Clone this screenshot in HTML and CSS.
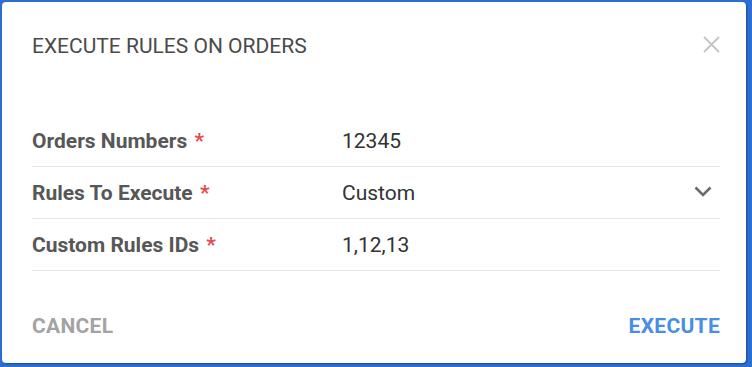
FILE: index.html
```html
<!DOCTYPE html>
<html>
<head>
<meta charset="utf-8">
<link rel="stylesheet" href="styles.css">
</head>
<body>
<div class="dialog">
  <div class="header">
    <div class="title">EXECUTE RULES ON ORDERS</div>
    <svg class="close" width="17" height="17" viewBox="0 0 17 17"><path d="M1 1L16 16M16 1L1 16" stroke="#c4c4c4" stroke-width="1.8" fill="none"/></svg>
  </div>
  <div class="form">
    <div class="row">
      <div class="label">Orders Numbers <span class="req">*</span></div>
      <div class="value">12345</div>
    </div>
    <div class="row">
      <div class="label">Rules To Execute <span class="req">*</span></div>
      <div class="value">Custom</div>
      <svg class="chev" width="18" height="11" viewBox="0 0 18 11"><path d="M1.5 1.5L9 9L16.5 1.5" stroke="#6b6b6b" stroke-width="2.6" fill="none"/></svg>
    </div>
    <div class="row">
      <div class="label">Custom Rules IDs <span class="req">*</span></div>
      <div class="value">1,12,13</div>
    </div>
  </div>
  <div class="footer">
    <div class="btn cancel">CANCEL</div>
    <div class="btn execute">EXECUTE</div>
  </div>
</div>
</body>
</html>
```
FILE: styles.css
```css
html, body {
  margin: 0;
  padding: 0;
}
body {
  background: #2b6fd4;
  width: 752px;
  height: 367px;
  overflow: hidden;
  font-family: Roboto, "Liberation Sans", sans-serif;
}
.dialog {
  margin: 2px 0 0 2px;
  width: 744px;
  height: 361px;
  background: #fff;
  border-radius: 4px;
  box-shadow: 1px 1px 2px rgba(0,0,0,0.35);
  box-sizing: border-box;
  padding: 0 26px 0 30px;
  display: flex;
  flex-direction: column;
}
.header {
  display: flex;
  align-items: center;
  justify-content: space-between;
  height: 24px;
  padding: 32px 0 32px 0;
}
.title {
  font-size: 21px;
  color: #4a4a4a;
  line-height: 24px;
}
.close {
  display: block;
  margin-top: -3px;
}
.form {
  padding-top: 25px;
}
.row {
  display: flex;
  align-items: center;
  height: 51px;
  border-bottom: 1px solid #e6e6e6;
}
.label {
  width: 310px;
  flex: none;
  font-weight: 700;
  font-size: 21px;
  color: #575757;
}
.req {
  color: #e5484d;
  margin-left: 2px;
}
.value {
  flex: 1;
  font-size: 21px;
  color: #333;
}
.chev {
  display: block;
  margin-right: 8px;
  margin-top: -2px;
}
.footer {
  display: flex;
  justify-content: space-between;
  padding-top: 43px;
}
.btn {
  font-weight: 700;
  font-size: 21px;
  line-height: 24px;
  letter-spacing: 0.3px;
}
.cancel {
  color: #a3a3a3;
}
.execute {
  color: #4a8de6;
}
```
